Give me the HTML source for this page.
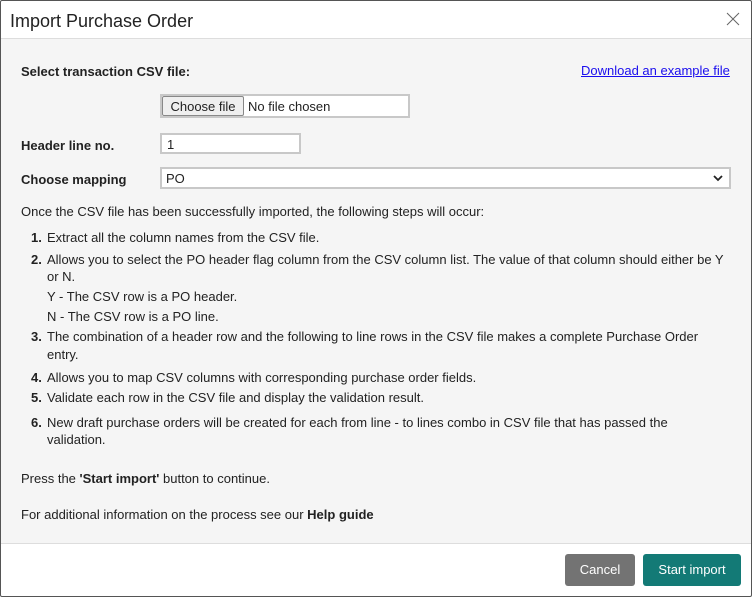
<!DOCTYPE html>
<html><head><style>
*{margin:0;padding:0;box-sizing:border-box}
body{width:752px;height:597px;background:#fff;font-family:"Liberation Sans",sans-serif;font-size:13px;color:#222;position:relative;overflow:hidden}
.frame{position:absolute;left:0;top:0;width:752px;height:597px;border:1px solid #555;border-radius:2px}
.hdr{position:absolute;left:1px;top:1px;width:750px;height:38px;background:#fff;border-bottom:1px solid #ddd}
.body{position:absolute;left:1px;top:39px;width:750px;height:505px;background:#f5f5f5;border-bottom:1px solid #ddd}
.t{position:absolute;line-height:16px;white-space:nowrap;margin-top:1px}
.b{font-weight:bold}
.inp{position:absolute;background:#fff;border:2px solid #c8c8c8}
.btn{position:absolute;color:#fff;font-size:13px;text-align:center;line-height:32px;border-radius:3px}
</style></head><body>
<div class="hdr"></div>
<div class="body"></div>
<div class="t" style="left:10px;top:9px;font-size:18px;line-height:22px;color:#222">Import Purchase Order</div>
<svg style="position:absolute;left:726px;top:12px" width="14" height="14" viewBox="0 0 14 14"><path d="M1 1L13 13M13 1L1 13" stroke="#666" stroke-width="1"/></svg>

<div class="t b" style="left:21px;top:63px">Select transaction CSV file:</div>
<a class="t" style="left:581px;top:62px;color:#1a0dee;text-decoration:underline">Download an example file</a>

<div class="inp" style="left:160px;top:94px;width:250px;height:24px"></div>
<div style="position:absolute;left:162px;top:96px;width:82px;height:20px;background:#efefef;border:1px solid #888;border-radius:2px;text-align:center;line-height:19px">Choose file</div>
<div class="t" style="left:248px;top:98px">No file chosen</div>

<div class="t b" style="left:21px;top:137px">Header line no.</div>
<div class="inp" style="left:160px;top:133px;width:141px;height:21px"></div>
<div class="t" style="left:167px;top:136px">1</div>

<div class="t b" style="left:21px;top:171px">Choose mapping</div>
<div class="inp" style="left:160px;top:167px;width:571px;height:22px"></div>
<div class="t" style="left:166px;top:170px">PO</div>
<svg style="position:absolute;left:713px;top:174px" width="10" height="8" viewBox="0 0 10 8"><path d="M1 2L5 6L9 2" stroke="#222" stroke-width="1.8" fill="none"/></svg>

<div class="t" style="left:21px;top:203px">Once the CSV file has been successfully imported, the following steps will occur:</div>
<div class="t b" style="left:31px;top:229px">1.</div><div class="t" style="left:47px;top:229px">Extract all the column names from the CSV file.</div>
<div class="t b" style="left:31px;top:251px">2.</div><div class="t" style="left:47px;top:251px">Allows you to select the PO header flag column from the CSV column list. The value of that column should either be Y</div>
<div class="t" style="left:47px;top:268px">or N.</div>
<div class="t" style="left:47px;top:288px">Y - The CSV row is a PO header.</div>
<div class="t" style="left:47px;top:308px">N - The CSV row is a PO line.</div>
<div class="t b" style="left:31px;top:328px">3.</div><div class="t" style="left:47px;top:328px">The combination of a header row and the following to line rows in the CSV file makes a complete Purchase Order</div>
<div class="t" style="left:47px;top:346px">entry.</div>
<div class="t b" style="left:31px;top:369px">4.</div><div class="t" style="left:47px;top:369px">Allows you to map CSV columns with corresponding purchase order fields.</div>
<div class="t b" style="left:31px;top:389px">5.</div><div class="t" style="left:47px;top:389px">Validate each row in the CSV file and display the validation result.</div>
<div class="t b" style="left:31px;top:414px">6.</div><div class="t" style="left:47px;top:414px">New draft purchase orders will be created for each from line - to lines combo in CSV file that has passed the</div>
<div class="t" style="left:47px;top:431px">validation.</div>
<div class="t" style="left:21px;top:470px">Press the <b>'Start import'</b> button to continue.</div>
<div class="t" style="left:21px;top:506px">For additional information on the process see our <b>Help guide</b></div>

<div class="btn" style="left:565px;top:554px;width:70px;background:#737373">Cancel</div>
<div class="btn" style="left:643px;top:554px;width:98px;background:#137a76">Start import</div>
<div class="frame"></div>
</body></html>
